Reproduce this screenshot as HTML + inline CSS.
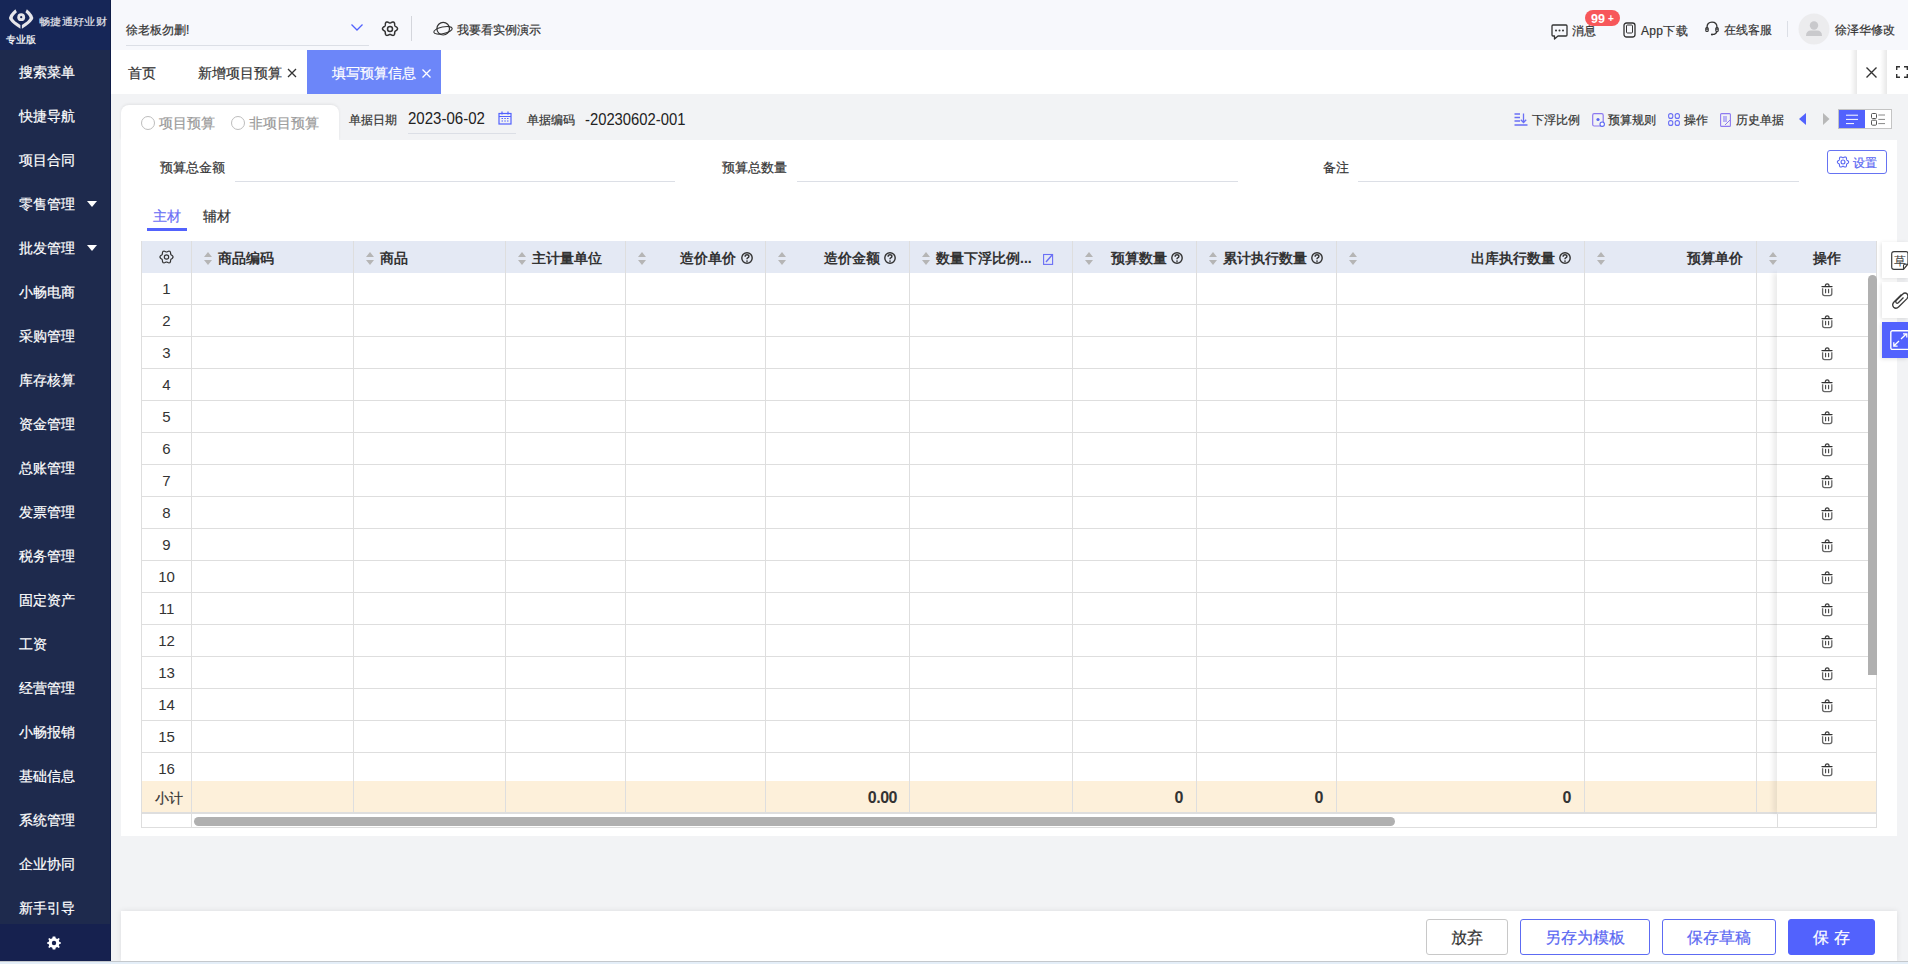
<!DOCTYPE html>
<html><head><meta charset="utf-8"><title>budget</title><style>
*{box-sizing:border-box;margin:0;padding:0}
html,body{width:1908px;height:964px;overflow:hidden;background:#f2f3f5;font-family:"Liberation Sans",sans-serif;color:#333}
body div{-webkit-text-stroke:0.2px currentColor}
.a{position:absolute;white-space:nowrap}
svg{position:absolute;overflow:visible}
#sb{position:absolute;left:0;top:0;width:111px;height:961px;background:#1e2a4d;border-right:1px solid #101d47}
#logo{position:absolute;left:0;top:0;width:110px;height:50px;background:#162657}
#sbfoot{position:absolute;left:0;top:924px;width:110px;height:37px;background:#16214f}
.mi{position:absolute;left:19px;font-size:14px;color:#fff;line-height:20px;white-space:nowrap}
.tri{position:absolute;left:87px;width:0;height:0;border-left:5px solid transparent;border-right:5px solid transparent;border-top:6px solid #fff}
#hdr{position:absolute;left:111px;top:0;width:1797px;height:50px;background:#f7f8fc}
#tabs{position:absolute;left:111px;top:50px;width:1797px;height:44px;background:#fff}
.t10{font-size:10px;line-height:12px}
.t11{font-size:11px;line-height:14px}
.t12{font-size:12px;line-height:16px}
.t13{font-size:13px;line-height:18px}
.t14{font-size:14px;line-height:20px}
.t15{font-size:15px;line-height:20px}
.t16{font-size:16px;line-height:22px}
.ul{position:absolute;height:1px;background:#dcdfe6}
#panel{position:absolute;left:121px;top:140px;width:1776px;height:696px;background:#fff}
#foot{position:absolute;left:121px;top:911px;width:1776px;height:50px;background:#fff;box-shadow:0 0 6px rgba(0,0,0,.09)}
#bstrip{position:absolute;left:0;top:961px;width:1908px;height:3px;background:#e4eef8;border-top:1px solid #c4c8cc}
.btn{position:absolute;top:919px;height:36px;border:1px solid #5d6bf3;border-radius:3px;background:#fff;color:#5a67f2;font-size:16px;line-height:35px;text-align:center;white-space:nowrap}
.vl{position:absolute;width:1px;background:#dedede}
.hl{position:absolute;height:1px;background:#dedede}
.rn{position:absolute;text-align:center;font-size:15px;line-height:20px;color:#333;-webkit-text-stroke:0}
.hd{position:absolute;top:250px;font-size:14px;line-height:16px;font-weight:bold;color:#333;white-space:nowrap;-webkit-text-stroke:0}
</style></head><body>
<div id="sb"><div id="logo"></div><div id="sbfoot"></div></div>
<svg style="left:9px;top:9px" width="25" height="21" viewBox="0 0 25 21">
<path d="M6.4 0.3 Q-1.5 7 0.5 10.5 Q3 14.5 11.4 19.8 L11.4 16 Q5 12 3.8 9.5 Q3 7.5 7.9 3.2 Z" fill="#e6e6ea"/>
<path d="M17.9 0.3 Q25.8 7 23.8 10.5 Q21.3 14.5 12.9 19.8 L12.9 16 Q19.3 12 20.5 9.5 Q21.3 7.5 16.4 3.2 Z" fill="#e6e6ea"/>
<circle cx="12.2" cy="8.2" r="3.9" fill="#e6e6ea"/><circle cx="12.2" cy="8.2" r="1.1" fill="#162657"/>
</svg>
<div class="a" style="left:39px;top:15px;font-size:11px;line-height:12px;color:#e4e4ea;letter-spacing:0.35px;transform:scaleY(0.9);transform-origin:0 50%">畅捷通好业财</div>
<div class="a t10" style="left:6px;top:34px;color:#fff">专业版</div>
<div class="mi" style="top:62px">搜索菜单</div>
<div class="mi" style="top:106px">快捷导航</div>
<div class="mi" style="top:150px">项目合同</div>
<div class="mi" style="top:194px">零售管理</div>
<div class="tri" style="top:201px"></div>
<div class="mi" style="top:238px">批发管理</div>
<div class="tri" style="top:245px"></div>
<div class="mi" style="top:282px">小畅电商</div>
<div class="mi" style="top:326px">采购管理</div>
<div class="mi" style="top:370px">库存核算</div>
<div class="mi" style="top:414px">资金管理</div>
<div class="mi" style="top:458px">总账管理</div>
<div class="mi" style="top:502px">发票管理</div>
<div class="mi" style="top:546px">税务管理</div>
<div class="mi" style="top:590px">固定资产</div>
<div class="mi" style="top:634px">工资</div>
<div class="mi" style="top:678px">经营管理</div>
<div class="mi" style="top:722px">小畅报销</div>
<div class="mi" style="top:766px">基础信息</div>
<div class="mi" style="top:810px">系统管理</div>
<div class="mi" style="top:854px">企业协同</div>
<div class="mi" style="top:898px">新手引导</div>
<svg style="left:47px;top:936px" width="14" height="14" viewBox="0 0 14 14">
<path d="M7 0.5 L8.3 0.5 L8.7 2.3 L10.2 3 L11.8 2 L12.7 2.9 L11.8 4.5 L12.4 6 L14 6.4 L14 7.6 L12.4 8 L11.8 9.5 L12.7 11.1 L11.8 12 L10.2 11.1 L8.7 11.7 L8.3 13.5 L5.7 13.5 L5.3 11.7 L3.8 11.1 L2.2 12 L1.3 11.1 L2.2 9.5 L1.6 8 L0 7.6 L0 6.4 L1.6 6 L2.2 4.5 L1.3 2.9 L2.2 2 L3.8 3 L5.3 2.3 L5.7 0.5 Z" fill="#fff"/>
<circle cx="7" cy="7" r="2.2" fill="#16214f"/></svg>
<div id="hdr"></div>
<div class="a t12" style="left:126px;top:22px;color:#333">徐老板勿删!</div>
<div class="ul" style="left:126px;top:45px;width:243px;background:#dcdfe6"></div>
<svg style="left:351px;top:24px" width="12" height="7" viewBox="0 0 12 7"><path d="M0.5 0.5 L6 6 L11.5 0.5" fill="none" stroke="#5262fd" stroke-width="1.3"/></svg>
<svg style="left:382px;top:21px" width="16" height="16" viewBox="0 0 16 16">
<path d="M15.50 7.70 L15.45 8.09 L15.29 8.47 L15.04 8.82 L14.73 9.13 L14.38 9.41 L14.01 9.65 L13.67 9.88 L13.36 10.09 L13.12 10.31 L12.94 10.55 L12.82 10.83 L12.75 11.15 L12.72 11.52 L12.70 11.93 L12.67 12.37 L12.60 12.81 L12.49 13.24 L12.31 13.63 L12.06 13.95 L11.75 14.20 L11.38 14.34 L10.98 14.39 L10.55 14.36 L10.13 14.24 L9.71 14.08 L9.31 13.88 L8.95 13.70 L8.61 13.54 L8.30 13.44 L8.00 13.40 L7.70 13.44 L7.39 13.54 L7.05 13.70 L6.69 13.88 L6.29 14.08 L5.87 14.24 L5.45 14.36 L5.02 14.39 L4.62 14.34 L4.25 14.20 L3.94 13.95 L3.69 13.63 L3.51 13.24 L3.40 12.81 L3.33 12.37 L3.30 11.93 L3.28 11.52 L3.25 11.15 L3.18 10.83 L3.06 10.55 L2.88 10.31 L2.64 10.09 L2.33 9.88 L1.99 9.65 L1.62 9.41 L1.27 9.13 L0.96 8.82 L0.71 8.47 L0.55 8.09 L0.50 7.70 L0.55 7.31 L0.71 6.93 L0.96 6.58 L1.27 6.27 L1.62 5.99 L1.99 5.75 L2.33 5.52 L2.64 5.31 L2.88 5.09 L3.06 4.85 L3.18 4.57 L3.25 4.25 L3.28 3.88 L3.30 3.47 L3.33 3.03 L3.40 2.59 L3.51 2.16 L3.69 1.77 L3.94 1.45 L4.25 1.20 L4.62 1.06 L5.02 1.01 L5.45 1.04 L5.87 1.16 L6.29 1.32 L6.69 1.52 L7.05 1.70 L7.39 1.86 L7.70 1.96 L8.00 2.00 L8.30 1.96 L8.61 1.86 L8.95 1.70 L9.31 1.52 L9.71 1.32 L10.13 1.16 L10.55 1.04 L10.98 1.01 L11.38 1.06 L11.75 1.20 L12.06 1.45 L12.31 1.77 L12.49 2.16 L12.60 2.59 L12.67 3.03 L12.70 3.47 L12.72 3.88 L12.75 4.25 L12.82 4.57 L12.94 4.85 L13.12 5.09 L13.36 5.31 L13.67 5.52 L14.01 5.75 L14.38 5.99 L14.73 6.27 L15.04 6.58 L15.29 6.93 L15.45 7.31 Z" fill="none" stroke="#333" stroke-width="1.5" stroke-linejoin="round"/>
<circle cx="8" cy="7.9" r="2.5" fill="none" stroke="#333" stroke-width="1.5"/></svg>
<div class="vl" style="left:411px;top:16px;height:25px;background:#d4d6dc"></div>
<svg style="left:433px;top:21px" width="20" height="16" viewBox="0 0 20 16">
<circle cx="10.2" cy="7.7" r="6.3" fill="none" stroke="#333" stroke-width="1.2"/>
<ellipse cx="10" cy="9.3" rx="9.4" ry="3.3" transform="rotate(-12 10 9.3)" fill="none" stroke="#333" stroke-width="1.1" stroke-dasharray="0"/>
</svg>
<div class="a t12" style="left:457px;top:22px;color:#333">我要看实例演示</div>
<svg style="left:1551px;top:24px" width="17" height="16" viewBox="0 0 17 16">
<path d="M2 1 H15 Q16 1 16 2 V11 Q16 12 15 12 H7 L3.5 15 V12 H2 Q1 12 1 11 V2 Q1 1 2 1 Z" fill="none" stroke="#333" stroke-width="1.3" stroke-linejoin="round"/>
<circle cx="5" cy="6.5" r="1" fill="#333"/><circle cx="8.5" cy="6.5" r="1" fill="#333"/><circle cx="12" cy="6.5" r="1" fill="#333"/></svg>
<div class="a t12" style="left:1572px;top:23px">消息</div>
<div class="a" style="left:1585px;top:10px;width:35px;height:16px;border-radius:8px;background:#f7575a;color:#fff;font-size:11px;line-height:16px;font-weight:bold;text-align:center;-webkit-text-stroke:0"><span style="font-size:12.5px;position:relative;top:0.5px">99</span> <span style="font-size:10px">+</span></div>
<svg style="left:1623px;top:22px" width="13" height="16" viewBox="0 0 13 16">
<rect x="1" y="1" width="11" height="14" rx="2.5" fill="none" stroke="#333" stroke-width="1.3"/>
<rect x="3.5" y="3" width="6" height="8" rx="1" fill="none" stroke="#333" stroke-width="1"/></svg>
<div class="a t12" style="left:1641px;top:23px;letter-spacing:0.3px">App下载</div>
<svg style="left:1705px;top:21px" width="14" height="15" viewBox="0 0 14 15">
<path d="M2 9 V6.5 Q2 1.2 7 1.2 Q12 1.2 12 6.5 V9" fill="none" stroke="#333" stroke-width="1.3"/>
<rect x="0.8" y="6.5" width="2.4" height="4" rx="1" fill="none" stroke="#333" stroke-width="1.2"/>
<rect x="10.8" y="6.5" width="2.4" height="4" rx="1" fill="none" stroke="#333" stroke-width="1.2"/>
<path d="M12 10.5 Q11 13.5 7.5 13.5" fill="none" stroke="#333" stroke-width="1.2"/><circle cx="7" cy="13.5" r="1.1" fill="#333"/></svg>
<div class="a t12" style="left:1724px;top:22px">在线客服</div>
<div class="vl" style="left:1787px;top:21px;height:16px;background:#dcdfe6"></div>
<svg style="left:1798px;top:13px" width="32" height="32" viewBox="0 0 32 32">
<circle cx="16" cy="16" r="15.5" fill="#ececee"/>
<circle cx="16" cy="12.5" r="4.2" fill="#c9c9cc"/><path d="M8 23 Q8 17.5 13 17.5 H19 Q24 17.5 24 23 Z" fill="#c9c9cc"/></svg>
<div class="a t12" style="left:1835px;top:22px">徐泽华修改</div>
<div id="tabs"></div>
<div class="a t14" style="left:128px;top:63px">首页</div>
<div class="a t14" style="left:198px;top:63px">新增项目预算</div>
<svg style="left:287px;top:68px" width="10" height="10" viewBox="0 0 10 10"><path d="M1 1 L9 9 M9 1 L1 9" stroke="#333" stroke-width="1.3"/></svg>
<div class="a" style="left:307px;top:50px;width:134px;height:44px;background:#6c86f9"></div>
<div class="a t14" style="left:332px;top:63px;color:#fff">填写预算信息</div>
<svg style="left:422px;top:69px" width="9" height="9" viewBox="0 0 9 9"><path d="M0.5 0.5 L8.5 8.5 M8.5 0.5 L0.5 8.5" stroke="#fff" stroke-width="1.3"/></svg>
<div class="a" style="left:1850px;top:50px;width:7px;height:44px;background:linear-gradient(to right,rgba(0,0,0,0),rgba(0,0,0,.09))"></div>
<svg style="left:1866px;top:67px" width="11" height="11" viewBox="0 0 11 11"><path d="M0.5 0.5 L10.5 10.5 M10.5 0.5 L0.5 10.5" stroke="#333" stroke-width="1.4"/></svg>
<div class="a" style="left:1880px;top:50px;width:7px;height:44px;background:linear-gradient(to right,rgba(0,0,0,0),rgba(0,0,0,.09))"></div>
<svg style="left:1896px;top:66px" width="12" height="12" viewBox="0 0 12 12">
<path d="M0.7 4 V0.7 H4 M8 0.7 H11.3 V4 M11.3 8 V11.3 H8 M4 11.3 H0.7 V8" fill="none" stroke="#333" stroke-width="1.4"/></svg>
<div class="a" style="left:121px;top:105px;width:218px;height:35px;background:#fff;border-radius:8px 8px 0 0;box-shadow:0 -1px 3px rgba(0,0,0,.07)"></div>
<div class="a" style="left:141px;top:116px;width:14px;height:14px;border:1px solid #bdbdbd;border-radius:50%;background:#fff"></div>
<div class="a t14" style="left:159px;top:113px;color:#999">项目预算</div>
<div class="a" style="left:231px;top:116px;width:14px;height:14px;border:1px solid #bdbdbd;border-radius:50%;background:#fff"></div>
<div class="a t14" style="left:249px;top:113px;color:#999">非项目预算</div>
<div class="a t12" style="left:349px;top:112px">单据日期</div>
<div class="a" style="left:408px;top:109px;color:#222;font-size:16px;line-height:20px;-webkit-text-stroke:0;transform:scaleX(0.94);transform-origin:0 0">2023-06-02</div>
<svg style="left:498px;top:111px" width="14" height="14" viewBox="0 0 14 14">
<rect x="1" y="2.5" width="12" height="10.5" fill="none" stroke="#5262fd" stroke-width="1.2"/>
<path d="M1 5.5 H13 M4 0.5 V3.5 M10 0.5 V3.5" stroke="#5262fd" stroke-width="1.2"/>
<path d="M3.5 7.5 H5 M6.3 7.5 H7.8 M9 7.5 H10.5 M3.5 10 H5 M6.3 10 H7.8 M9 10 H10.5" stroke="#5262fd" stroke-width="1"/></svg>
<div class="ul" style="left:408px;top:133px;width:108px"></div>
<div class="a t12" style="left:527px;top:112px">单据编码</div>
<div class="a" style="left:585px;top:110px;color:#222;font-size:16px;line-height:20px;-webkit-text-stroke:0;transform:scaleX(0.925);transform-origin:0 0">-20230602-001</div>
<svg style="left:1514px;top:113px" width="14" height="13" viewBox="0 0 14 13">
<path d="M0.5 1 H6 M0.5 4.5 H6 M0.5 8 H6 M0.5 12 H13.5 M9.5 0.5 V9.5 M6.8 6.8 L9.5 9.5 L12.2 6.8" fill="none" stroke="#6a6ff5" stroke-width="1.3"/></svg>
<div class="a t12" style="left:1532px;top:112px">下浮比例</div>
<svg style="left:1592px;top:113px" width="13" height="14" viewBox="0 0 13 14">
<rect x="0.7" y="0.7" width="10.5" height="12.3" rx="1.5" fill="none" stroke="#8d79f0" stroke-width="1.2"/>
<circle cx="6" cy="6.5" r="1.6" fill="#5a67f2"/><circle cx="10.2" cy="11.2" r="2.2" fill="#fff" stroke="#5a67f2" stroke-width="1.1"/></svg>
<div class="a t12" style="left:1608px;top:112px">预算规则</div>
<svg style="left:1668px;top:113px" width="12" height="13" viewBox="0 0 12 13">
<rect x="0.6" y="0.6" width="4.2" height="4.8" rx="2" fill="none" stroke="#6a6ff5" stroke-width="1.1"/>
<rect x="7.2" y="0.6" width="4.2" height="4.8" rx="2" fill="none" stroke="#6a6ff5" stroke-width="1.1"/>
<rect x="0.6" y="7.6" width="4.2" height="4.8" rx="2" fill="none" stroke="#6a6ff5" stroke-width="1.1"/>
<rect x="7.2" y="7.6" width="4.2" height="4.8" rx="2" fill="none" stroke="#6a6ff5" stroke-width="1.1"/></svg>
<div class="a t12" style="left:1684px;top:112px">操作</div>
<svg style="left:1720px;top:113px" width="11" height="14" viewBox="0 0 11 14">
<rect x="0.6" y="0.6" width="9.8" height="12.8" rx="1" fill="none" stroke="#8d79f0" stroke-width="1.1"/>
<rect x="3" y="3" width="4" height="6" fill="#b9b2f5"/><path d="M5 12 L10 7" stroke="#8d79f0" stroke-width="1"/></svg>
<div class="a t12" style="left:1736px;top:112px">历史单据</div>
<svg style="left:1799px;top:113px" width="7" height="12" viewBox="0 0 7 12"><path d="M7 0 V12 L0 6 Z" fill="#5262fd"/></svg>
<svg style="left:1823px;top:113px" width="6.5" height="12" viewBox="0 0 6.5 12"><path d="M0 0 V12 L6.5 6 Z" fill="#b8b8b8"/></svg>
<div class="a" style="left:1838px;top:109px;width:54px;height:20px;border:1px solid #c4c4c4;background:#fff"></div>
<div class="a" style="left:1839px;top:110px;width:26px;height:18px;background:#5262fd"></div>
<svg style="left:1846px;top:114px" width="12" height="10" viewBox="0 0 12 10"><path d="M0 1.2 H12 M0 5.4 H12 M0 9.6 H8" stroke="#fff" stroke-width="1"/></svg>
<svg style="left:1871px;top:113px" width="14" height="13" viewBox="0 0 14 13">
<rect x="0.5" y="0.5" width="5" height="5" rx="1" fill="none" stroke="#555" stroke-width="1"/><rect x="0.5" y="7.2" width="5" height="5" rx="1" fill="none" stroke="#555" stroke-width="1"/>
<path d="M7.3 2 H14 M7.3 6.4 H14 M7.3 10.6 H14" stroke="#888" stroke-width="1"/></svg>
<div id="panel"></div>
<div class="a t13" style="left:160px;top:159px">预算总金额</div>
<div class="ul" style="left:235px;top:181px;width:440px"></div>
<div class="a t13" style="left:722px;top:159px">预算总数量</div>
<div class="ul" style="left:797px;top:181px;width:441px"></div>
<div class="a t13" style="left:1323px;top:159px">备注</div>
<div class="ul" style="left:1358px;top:181px;width:441px"></div>
<div class="a" style="left:1827px;top:150px;width:60px;height:24px;border:1px solid #6673f2;border-radius:3px"></div>
<svg style="left:1837px;top:156px" width="12" height="12" viewBox="0 0 16 16">
<path d="M15.50 8.00 L15.45 8.39 L15.29 8.77 L15.04 9.12 L14.73 9.43 L14.38 9.71 L14.01 9.95 L13.67 10.18 L13.36 10.39 L13.12 10.61 L12.94 10.85 L12.82 11.13 L12.75 11.45 L12.72 11.82 L12.70 12.23 L12.67 12.67 L12.60 13.11 L12.49 13.54 L12.31 13.93 L12.06 14.25 L11.75 14.50 L11.38 14.64 L10.98 14.69 L10.55 14.66 L10.13 14.54 L9.71 14.38 L9.31 14.18 L8.95 14.00 L8.61 13.84 L8.30 13.74 L8.00 13.70 L7.70 13.74 L7.39 13.84 L7.05 14.00 L6.69 14.18 L6.29 14.38 L5.87 14.54 L5.45 14.66 L5.02 14.69 L4.62 14.64 L4.25 14.50 L3.94 14.25 L3.69 13.93 L3.51 13.54 L3.40 13.11 L3.33 12.67 L3.30 12.23 L3.28 11.82 L3.25 11.45 L3.18 11.13 L3.06 10.85 L2.88 10.61 L2.64 10.39 L2.33 10.18 L1.99 9.95 L1.62 9.71 L1.27 9.43 L0.96 9.12 L0.71 8.77 L0.55 8.39 L0.50 8.00 L0.55 7.61 L0.71 7.23 L0.96 6.88 L1.27 6.57 L1.62 6.29 L1.99 6.05 L2.33 5.82 L2.64 5.61 L2.88 5.39 L3.06 5.15 L3.18 4.87 L3.25 4.55 L3.28 4.18 L3.30 3.77 L3.33 3.33 L3.40 2.89 L3.51 2.46 L3.69 2.07 L3.94 1.75 L4.25 1.50 L4.62 1.36 L5.02 1.31 L5.45 1.34 L5.87 1.46 L6.29 1.62 L6.69 1.82 L7.05 2.00 L7.39 2.16 L7.70 2.26 L8.00 2.30 L8.30 2.26 L8.61 2.16 L8.95 2.00 L9.31 1.82 L9.71 1.62 L10.13 1.46 L10.55 1.34 L10.98 1.31 L11.38 1.36 L11.75 1.50 L12.06 1.75 L12.31 2.07 L12.49 2.46 L12.60 2.89 L12.67 3.33 L12.70 3.77 L12.72 4.18 L12.75 4.55 L12.82 4.87 L12.94 5.15 L13.12 5.39 L13.36 5.61 L13.67 5.82 L14.01 6.05 L14.38 6.29 L14.73 6.57 L15.04 6.88 L15.29 7.23 L15.45 7.61 Z" fill="none" stroke="#5a67f2" stroke-width="1.5" stroke-linejoin="round"/>
<circle cx="8" cy="8" r="2.6" fill="none" stroke="#5a67f2" stroke-width="1.5"/></svg>
<div class="a t12" style="left:1853px;top:155px;color:#5a67f2">设置</div>
<div class="a t14" style="left:153px;top:206px;color:#6a6ff5">主材</div>
<div class="a" style="left:147px;top:228px;width:40px;height:3px;background:#5262fd"></div>
<div class="a t14" style="left:203px;top:206px">辅材</div>
<div class="a" style="left:141px;top:241px;width:1736px;height:32px;background:#e4e9f4"></div>
<div class="rn" style="left:141px;width:51px;top:279px">1</div>
<div class="hl" style="left:141px;top:304px;width:1636px"></div>
<div class="rn" style="left:141px;width:51px;top:311px">2</div>
<div class="hl" style="left:141px;top:336px;width:1636px"></div>
<div class="rn" style="left:141px;width:51px;top:343px">3</div>
<div class="hl" style="left:141px;top:368px;width:1636px"></div>
<div class="rn" style="left:141px;width:51px;top:375px">4</div>
<div class="hl" style="left:141px;top:400px;width:1636px"></div>
<div class="rn" style="left:141px;width:51px;top:407px">5</div>
<div class="hl" style="left:141px;top:432px;width:1636px"></div>
<div class="rn" style="left:141px;width:51px;top:439px">6</div>
<div class="hl" style="left:141px;top:464px;width:1636px"></div>
<div class="rn" style="left:141px;width:51px;top:471px">7</div>
<div class="hl" style="left:141px;top:496px;width:1636px"></div>
<div class="rn" style="left:141px;width:51px;top:503px">8</div>
<div class="hl" style="left:141px;top:528px;width:1636px"></div>
<div class="rn" style="left:141px;width:51px;top:535px">9</div>
<div class="hl" style="left:141px;top:560px;width:1636px"></div>
<div class="rn" style="left:141px;width:51px;top:567px">10</div>
<div class="hl" style="left:141px;top:592px;width:1636px"></div>
<div class="rn" style="left:141px;width:51px;top:599px">11</div>
<div class="hl" style="left:141px;top:624px;width:1636px"></div>
<div class="rn" style="left:141px;width:51px;top:631px">12</div>
<div class="hl" style="left:141px;top:656px;width:1636px"></div>
<div class="rn" style="left:141px;width:51px;top:663px">13</div>
<div class="hl" style="left:141px;top:688px;width:1636px"></div>
<div class="rn" style="left:141px;width:51px;top:695px">14</div>
<div class="hl" style="left:141px;top:720px;width:1636px"></div>
<div class="rn" style="left:141px;width:51px;top:727px">15</div>
<div class="hl" style="left:141px;top:752px;width:1636px"></div>
<div class="rn" style="left:141px;width:51px;top:759px">16</div>
<div class="hl" style="left:141px;top:784px;width:1636px"></div>
<div class="a" style="left:141px;top:781px;width:1736px;height:31px;background:#fdf0da"></div>
<div class="a" style="left:141px;top:812px;width:1736px;height:2px;background:#dedede"></div>
<div class="a t14" style="left:155px;top:788px">小计</div>
<div class="a" style="left:837px;width:60px;top:788px;text-align:right;font-size:16px;line-height:20px;letter-spacing:-0.5px;font-weight:bold;-webkit-text-stroke:0">0.00</div>
<div class="a" style="left:1123px;width:60px;top:788px;text-align:right;font-size:16px;line-height:20px;letter-spacing:-0.5px;font-weight:bold;-webkit-text-stroke:0">0</div>
<div class="a" style="left:1263px;width:60px;top:788px;text-align:right;font-size:16px;line-height:20px;letter-spacing:-0.5px;font-weight:bold;-webkit-text-stroke:0">0</div>
<div class="a" style="left:1511px;width:60px;top:788px;text-align:right;font-size:16px;line-height:20px;letter-spacing:-0.5px;font-weight:bold;-webkit-text-stroke:0">0</div>
<div class="vl" style="left:141px;top:241px;height:586px"></div>
<div class="vl" style="left:191px;top:241px;height:586px"></div>
<div class="vl" style="left:353px;top:241px;height:586px"></div>
<div class="vl" style="left:505px;top:241px;height:586px"></div>
<div class="vl" style="left:625px;top:241px;height:586px"></div>
<div class="vl" style="left:765px;top:241px;height:586px"></div>
<div class="vl" style="left:909px;top:241px;height:586px"></div>
<div class="vl" style="left:1072px;top:241px;height:586px"></div>
<div class="vl" style="left:1196px;top:241px;height:586px"></div>
<div class="vl" style="left:1336px;top:241px;height:586px"></div>
<div class="vl" style="left:1584px;top:241px;height:586px"></div>
<div class="vl" style="left:1756px;top:241px;height:586px"></div>
<div class="hl" style="left:141px;top:827px;width:1736px"></div>
<div class="a" style="left:194px;top:817px;width:1201px;height:9px;border-radius:5px;background:#b0b0b0"></div>
<div class="a" style="left:193px;top:814px;width:1583px;height:13px;background:#fff"></div>
<div class="a" style="left:194px;top:817px;width:1201px;height:9px;border-radius:5px;background:#b0b0b0"></div>
<svg style="left:159px;top:250px" width="15" height="14" viewBox="0 0 16 16">
<path d="M15.50 8.00 L15.45 8.39 L15.29 8.77 L15.04 9.12 L14.73 9.43 L14.38 9.71 L14.01 9.95 L13.67 10.18 L13.36 10.39 L13.12 10.61 L12.94 10.85 L12.82 11.13 L12.75 11.45 L12.72 11.82 L12.70 12.23 L12.67 12.67 L12.60 13.11 L12.49 13.54 L12.31 13.93 L12.06 14.25 L11.75 14.50 L11.38 14.64 L10.98 14.69 L10.55 14.66 L10.13 14.54 L9.71 14.38 L9.31 14.18 L8.95 14.00 L8.61 13.84 L8.30 13.74 L8.00 13.70 L7.70 13.74 L7.39 13.84 L7.05 14.00 L6.69 14.18 L6.29 14.38 L5.87 14.54 L5.45 14.66 L5.02 14.69 L4.62 14.64 L4.25 14.50 L3.94 14.25 L3.69 13.93 L3.51 13.54 L3.40 13.11 L3.33 12.67 L3.30 12.23 L3.28 11.82 L3.25 11.45 L3.18 11.13 L3.06 10.85 L2.88 10.61 L2.64 10.39 L2.33 10.18 L1.99 9.95 L1.62 9.71 L1.27 9.43 L0.96 9.12 L0.71 8.77 L0.55 8.39 L0.50 8.00 L0.55 7.61 L0.71 7.23 L0.96 6.88 L1.27 6.57 L1.62 6.29 L1.99 6.05 L2.33 5.82 L2.64 5.61 L2.88 5.39 L3.06 5.15 L3.18 4.87 L3.25 4.55 L3.28 4.18 L3.30 3.77 L3.33 3.33 L3.40 2.89 L3.51 2.46 L3.69 2.07 L3.94 1.75 L4.25 1.50 L4.62 1.36 L5.02 1.31 L5.45 1.34 L5.87 1.46 L6.29 1.62 L6.69 1.82 L7.05 2.00 L7.39 2.16 L7.70 2.26 L8.00 2.30 L8.30 2.26 L8.61 2.16 L8.95 2.00 L9.31 1.82 L9.71 1.62 L10.13 1.46 L10.55 1.34 L10.98 1.31 L11.38 1.36 L11.75 1.50 L12.06 1.75 L12.31 2.07 L12.49 2.46 L12.60 2.89 L12.67 3.33 L12.70 3.77 L12.72 4.18 L12.75 4.55 L12.82 4.87 L12.94 5.15 L13.12 5.39 L13.36 5.61 L13.67 5.82 L14.01 6.05 L14.38 6.29 L14.73 6.57 L15.04 6.88 L15.29 7.23 L15.45 7.61 Z" fill="none" stroke="#333" stroke-width="1.3" stroke-linejoin="round"/>
<circle cx="8" cy="8" r="2.5" fill="none" stroke="#333" stroke-width="1.3"/></svg>
<svg style="left:204px;top:252px" width="8" height="13" viewBox="0 0 8 13"><path d="M4 0 L8 5 H0 Z M0 8 H8 L4 13 Z" fill="#b5b5b5"/></svg>
<div class="hd" style="left:218px">商品编码</div>
<svg style="left:366px;top:252px" width="8" height="13" viewBox="0 0 8 13"><path d="M4 0 L8 5 H0 Z M0 8 H8 L4 13 Z" fill="#b5b5b5"/></svg>
<div class="hd" style="left:380px">商品</div>
<svg style="left:518px;top:252px" width="8" height="13" viewBox="0 0 8 13"><path d="M4 0 L8 5 H0 Z M0 8 H8 L4 13 Z" fill="#b5b5b5"/></svg>
<div class="hd" style="left:532px">主计量单位</div>
<svg style="left:638px;top:252px" width="8" height="13" viewBox="0 0 8 13"><path d="M4 0 L8 5 H0 Z M0 8 H8 L4 13 Z" fill="#b5b5b5"/></svg>
<div class="hd" style="left:680px">造价单价</div>
<svg style="left:741px;top:252px" width="12" height="12" viewBox="0 0 12 12"><circle cx="6" cy="6" r="5.2" fill="none" stroke="#333" stroke-width="1.4"/><path d="M4.1 4.7 Q4.1 2.7 6 2.7 Q7.9 2.7 7.9 4.4 Q7.9 5.4 6.7 5.9 Q6 6.3 6 7.3" fill="none" stroke="#333" stroke-width="1.4"/><circle cx="6" cy="9.1" r="0.85" fill="#333"/></svg>
<svg style="left:778px;top:252px" width="8" height="13" viewBox="0 0 8 13"><path d="M4 0 L8 5 H0 Z M0 8 H8 L4 13 Z" fill="#b5b5b5"/></svg>
<div class="hd" style="left:824px">造价金额</div>
<svg style="left:884px;top:252px" width="12" height="12" viewBox="0 0 12 12"><circle cx="6" cy="6" r="5.2" fill="none" stroke="#333" stroke-width="1.4"/><path d="M4.1 4.7 Q4.1 2.7 6 2.7 Q7.9 2.7 7.9 4.4 Q7.9 5.4 6.7 5.9 Q6 6.3 6 7.3" fill="none" stroke="#333" stroke-width="1.4"/><circle cx="6" cy="9.1" r="0.85" fill="#333"/></svg>
<svg style="left:922px;top:252px" width="8" height="13" viewBox="0 0 8 13"><path d="M4 0 L8 5 H0 Z M0 8 H8 L4 13 Z" fill="#b5b5b5"/></svg>
<div class="hd" style="left:936px">数量下浮比例...</div>
<svg style="left:1043px;top:253px" width="11" height="12" viewBox="0 0 11 12">
<rect x="0.6" y="1.5" width="9" height="9.9" fill="none" stroke="#6a6ff5" stroke-width="1.1"/><path d="M3 9 L9.5 1.5" stroke="#6a6ff5" stroke-width="1.4"/></svg>
<svg style="left:1085px;top:252px" width="8" height="13" viewBox="0 0 8 13"><path d="M4 0 L8 5 H0 Z M0 8 H8 L4 13 Z" fill="#b5b5b5"/></svg>
<div class="hd" style="left:1111px">预算数量</div>
<svg style="left:1171px;top:252px" width="12" height="12" viewBox="0 0 12 12"><circle cx="6" cy="6" r="5.2" fill="none" stroke="#333" stroke-width="1.4"/><path d="M4.1 4.7 Q4.1 2.7 6 2.7 Q7.9 2.7 7.9 4.4 Q7.9 5.4 6.7 5.9 Q6 6.3 6 7.3" fill="none" stroke="#333" stroke-width="1.4"/><circle cx="6" cy="9.1" r="0.85" fill="#333"/></svg>
<svg style="left:1209px;top:252px" width="8" height="13" viewBox="0 0 8 13"><path d="M4 0 L8 5 H0 Z M0 8 H8 L4 13 Z" fill="#b5b5b5"/></svg>
<div class="hd" style="left:1223px">累计执行数量</div>
<svg style="left:1311px;top:252px" width="12" height="12" viewBox="0 0 12 12"><circle cx="6" cy="6" r="5.2" fill="none" stroke="#333" stroke-width="1.4"/><path d="M4.1 4.7 Q4.1 2.7 6 2.7 Q7.9 2.7 7.9 4.4 Q7.9 5.4 6.7 5.9 Q6 6.3 6 7.3" fill="none" stroke="#333" stroke-width="1.4"/><circle cx="6" cy="9.1" r="0.85" fill="#333"/></svg>
<svg style="left:1349px;top:252px" width="8" height="13" viewBox="0 0 8 13"><path d="M4 0 L8 5 H0 Z M0 8 H8 L4 13 Z" fill="#b5b5b5"/></svg>
<div class="hd" style="left:1471px">出库执行数量</div>
<svg style="left:1559px;top:252px" width="12" height="12" viewBox="0 0 12 12"><circle cx="6" cy="6" r="5.2" fill="none" stroke="#333" stroke-width="1.4"/><path d="M4.1 4.7 Q4.1 2.7 6 2.7 Q7.9 2.7 7.9 4.4 Q7.9 5.4 6.7 5.9 Q6 6.3 6 7.3" fill="none" stroke="#333" stroke-width="1.4"/><circle cx="6" cy="9.1" r="0.85" fill="#333"/></svg>
<svg style="left:1597px;top:252px" width="8" height="13" viewBox="0 0 8 13"><path d="M4 0 L8 5 H0 Z M0 8 H8 L4 13 Z" fill="#b5b5b5"/></svg>
<div class="hd" style="left:1687px">预算单价</div>
<svg style="left:1769px;top:252px" width="8" height="13" viewBox="0 0 8 13"><path d="M4 0 L8 5 H0 Z M0 8 H8 L4 13 Z" fill="#b5b5b5"/></svg>
<div class="a" style="left:1777px;top:273px;width:100px;height:540px;background:#fff;box-shadow:-4px 0 5px rgba(0,0,0,.08)"></div><div class="a" style="left:1777px;top:813px;width:100px;height:14px;background:#fff"></div>
<div class="a" style="left:1777px;top:241px;width:100px;height:32px;background:#e4e9f4"></div>
<div class="hd" style="left:1813px">操作</div>
<div class="hl" style="left:1777px;top:304px;width:100px"></div>
<svg style="left:1821px;top:283px" width="12" height="14" viewBox="0 0 12 14">
<path d="M4.3 3.4 Q4.3 0.8 6.2 0.8 Q8.1 0.8 8.1 3.4" fill="none" stroke="#444" stroke-width="1.2"/><path d="M1 3.6 H11" stroke="#333" stroke-width="1.3" stroke-linecap="round"/><path d="M1.6 5.2 V10.5 Q1.6 12.6 3.6 12.6 H8.8 Q10.8 12.6 10.8 10.5 V5.2" fill="none" stroke="#666" stroke-width="1.3"/><path d="M4.6 6.3 V9.7 M7.6 6.3 V9.7" stroke="#444" stroke-width="1.1" stroke-linecap="round"/></svg>
<div class="hl" style="left:1777px;top:336px;width:100px"></div>
<svg style="left:1821px;top:315px" width="12" height="14" viewBox="0 0 12 14">
<path d="M4.3 3.4 Q4.3 0.8 6.2 0.8 Q8.1 0.8 8.1 3.4" fill="none" stroke="#444" stroke-width="1.2"/><path d="M1 3.6 H11" stroke="#333" stroke-width="1.3" stroke-linecap="round"/><path d="M1.6 5.2 V10.5 Q1.6 12.6 3.6 12.6 H8.8 Q10.8 12.6 10.8 10.5 V5.2" fill="none" stroke="#666" stroke-width="1.3"/><path d="M4.6 6.3 V9.7 M7.6 6.3 V9.7" stroke="#444" stroke-width="1.1" stroke-linecap="round"/></svg>
<div class="hl" style="left:1777px;top:368px;width:100px"></div>
<svg style="left:1821px;top:347px" width="12" height="14" viewBox="0 0 12 14">
<path d="M4.3 3.4 Q4.3 0.8 6.2 0.8 Q8.1 0.8 8.1 3.4" fill="none" stroke="#444" stroke-width="1.2"/><path d="M1 3.6 H11" stroke="#333" stroke-width="1.3" stroke-linecap="round"/><path d="M1.6 5.2 V10.5 Q1.6 12.6 3.6 12.6 H8.8 Q10.8 12.6 10.8 10.5 V5.2" fill="none" stroke="#666" stroke-width="1.3"/><path d="M4.6 6.3 V9.7 M7.6 6.3 V9.7" stroke="#444" stroke-width="1.1" stroke-linecap="round"/></svg>
<div class="hl" style="left:1777px;top:400px;width:100px"></div>
<svg style="left:1821px;top:379px" width="12" height="14" viewBox="0 0 12 14">
<path d="M4.3 3.4 Q4.3 0.8 6.2 0.8 Q8.1 0.8 8.1 3.4" fill="none" stroke="#444" stroke-width="1.2"/><path d="M1 3.6 H11" stroke="#333" stroke-width="1.3" stroke-linecap="round"/><path d="M1.6 5.2 V10.5 Q1.6 12.6 3.6 12.6 H8.8 Q10.8 12.6 10.8 10.5 V5.2" fill="none" stroke="#666" stroke-width="1.3"/><path d="M4.6 6.3 V9.7 M7.6 6.3 V9.7" stroke="#444" stroke-width="1.1" stroke-linecap="round"/></svg>
<div class="hl" style="left:1777px;top:432px;width:100px"></div>
<svg style="left:1821px;top:411px" width="12" height="14" viewBox="0 0 12 14">
<path d="M4.3 3.4 Q4.3 0.8 6.2 0.8 Q8.1 0.8 8.1 3.4" fill="none" stroke="#444" stroke-width="1.2"/><path d="M1 3.6 H11" stroke="#333" stroke-width="1.3" stroke-linecap="round"/><path d="M1.6 5.2 V10.5 Q1.6 12.6 3.6 12.6 H8.8 Q10.8 12.6 10.8 10.5 V5.2" fill="none" stroke="#666" stroke-width="1.3"/><path d="M4.6 6.3 V9.7 M7.6 6.3 V9.7" stroke="#444" stroke-width="1.1" stroke-linecap="round"/></svg>
<div class="hl" style="left:1777px;top:464px;width:100px"></div>
<svg style="left:1821px;top:443px" width="12" height="14" viewBox="0 0 12 14">
<path d="M4.3 3.4 Q4.3 0.8 6.2 0.8 Q8.1 0.8 8.1 3.4" fill="none" stroke="#444" stroke-width="1.2"/><path d="M1 3.6 H11" stroke="#333" stroke-width="1.3" stroke-linecap="round"/><path d="M1.6 5.2 V10.5 Q1.6 12.6 3.6 12.6 H8.8 Q10.8 12.6 10.8 10.5 V5.2" fill="none" stroke="#666" stroke-width="1.3"/><path d="M4.6 6.3 V9.7 M7.6 6.3 V9.7" stroke="#444" stroke-width="1.1" stroke-linecap="round"/></svg>
<div class="hl" style="left:1777px;top:496px;width:100px"></div>
<svg style="left:1821px;top:475px" width="12" height="14" viewBox="0 0 12 14">
<path d="M4.3 3.4 Q4.3 0.8 6.2 0.8 Q8.1 0.8 8.1 3.4" fill="none" stroke="#444" stroke-width="1.2"/><path d="M1 3.6 H11" stroke="#333" stroke-width="1.3" stroke-linecap="round"/><path d="M1.6 5.2 V10.5 Q1.6 12.6 3.6 12.6 H8.8 Q10.8 12.6 10.8 10.5 V5.2" fill="none" stroke="#666" stroke-width="1.3"/><path d="M4.6 6.3 V9.7 M7.6 6.3 V9.7" stroke="#444" stroke-width="1.1" stroke-linecap="round"/></svg>
<div class="hl" style="left:1777px;top:528px;width:100px"></div>
<svg style="left:1821px;top:507px" width="12" height="14" viewBox="0 0 12 14">
<path d="M4.3 3.4 Q4.3 0.8 6.2 0.8 Q8.1 0.8 8.1 3.4" fill="none" stroke="#444" stroke-width="1.2"/><path d="M1 3.6 H11" stroke="#333" stroke-width="1.3" stroke-linecap="round"/><path d="M1.6 5.2 V10.5 Q1.6 12.6 3.6 12.6 H8.8 Q10.8 12.6 10.8 10.5 V5.2" fill="none" stroke="#666" stroke-width="1.3"/><path d="M4.6 6.3 V9.7 M7.6 6.3 V9.7" stroke="#444" stroke-width="1.1" stroke-linecap="round"/></svg>
<div class="hl" style="left:1777px;top:560px;width:100px"></div>
<svg style="left:1821px;top:539px" width="12" height="14" viewBox="0 0 12 14">
<path d="M4.3 3.4 Q4.3 0.8 6.2 0.8 Q8.1 0.8 8.1 3.4" fill="none" stroke="#444" stroke-width="1.2"/><path d="M1 3.6 H11" stroke="#333" stroke-width="1.3" stroke-linecap="round"/><path d="M1.6 5.2 V10.5 Q1.6 12.6 3.6 12.6 H8.8 Q10.8 12.6 10.8 10.5 V5.2" fill="none" stroke="#666" stroke-width="1.3"/><path d="M4.6 6.3 V9.7 M7.6 6.3 V9.7" stroke="#444" stroke-width="1.1" stroke-linecap="round"/></svg>
<div class="hl" style="left:1777px;top:592px;width:100px"></div>
<svg style="left:1821px;top:571px" width="12" height="14" viewBox="0 0 12 14">
<path d="M4.3 3.4 Q4.3 0.8 6.2 0.8 Q8.1 0.8 8.1 3.4" fill="none" stroke="#444" stroke-width="1.2"/><path d="M1 3.6 H11" stroke="#333" stroke-width="1.3" stroke-linecap="round"/><path d="M1.6 5.2 V10.5 Q1.6 12.6 3.6 12.6 H8.8 Q10.8 12.6 10.8 10.5 V5.2" fill="none" stroke="#666" stroke-width="1.3"/><path d="M4.6 6.3 V9.7 M7.6 6.3 V9.7" stroke="#444" stroke-width="1.1" stroke-linecap="round"/></svg>
<div class="hl" style="left:1777px;top:624px;width:100px"></div>
<svg style="left:1821px;top:603px" width="12" height="14" viewBox="0 0 12 14">
<path d="M4.3 3.4 Q4.3 0.8 6.2 0.8 Q8.1 0.8 8.1 3.4" fill="none" stroke="#444" stroke-width="1.2"/><path d="M1 3.6 H11" stroke="#333" stroke-width="1.3" stroke-linecap="round"/><path d="M1.6 5.2 V10.5 Q1.6 12.6 3.6 12.6 H8.8 Q10.8 12.6 10.8 10.5 V5.2" fill="none" stroke="#666" stroke-width="1.3"/><path d="M4.6 6.3 V9.7 M7.6 6.3 V9.7" stroke="#444" stroke-width="1.1" stroke-linecap="round"/></svg>
<div class="hl" style="left:1777px;top:656px;width:100px"></div>
<svg style="left:1821px;top:635px" width="12" height="14" viewBox="0 0 12 14">
<path d="M4.3 3.4 Q4.3 0.8 6.2 0.8 Q8.1 0.8 8.1 3.4" fill="none" stroke="#444" stroke-width="1.2"/><path d="M1 3.6 H11" stroke="#333" stroke-width="1.3" stroke-linecap="round"/><path d="M1.6 5.2 V10.5 Q1.6 12.6 3.6 12.6 H8.8 Q10.8 12.6 10.8 10.5 V5.2" fill="none" stroke="#666" stroke-width="1.3"/><path d="M4.6 6.3 V9.7 M7.6 6.3 V9.7" stroke="#444" stroke-width="1.1" stroke-linecap="round"/></svg>
<div class="hl" style="left:1777px;top:688px;width:100px"></div>
<svg style="left:1821px;top:667px" width="12" height="14" viewBox="0 0 12 14">
<path d="M4.3 3.4 Q4.3 0.8 6.2 0.8 Q8.1 0.8 8.1 3.4" fill="none" stroke="#444" stroke-width="1.2"/><path d="M1 3.6 H11" stroke="#333" stroke-width="1.3" stroke-linecap="round"/><path d="M1.6 5.2 V10.5 Q1.6 12.6 3.6 12.6 H8.8 Q10.8 12.6 10.8 10.5 V5.2" fill="none" stroke="#666" stroke-width="1.3"/><path d="M4.6 6.3 V9.7 M7.6 6.3 V9.7" stroke="#444" stroke-width="1.1" stroke-linecap="round"/></svg>
<div class="hl" style="left:1777px;top:720px;width:100px"></div>
<svg style="left:1821px;top:699px" width="12" height="14" viewBox="0 0 12 14">
<path d="M4.3 3.4 Q4.3 0.8 6.2 0.8 Q8.1 0.8 8.1 3.4" fill="none" stroke="#444" stroke-width="1.2"/><path d="M1 3.6 H11" stroke="#333" stroke-width="1.3" stroke-linecap="round"/><path d="M1.6 5.2 V10.5 Q1.6 12.6 3.6 12.6 H8.8 Q10.8 12.6 10.8 10.5 V5.2" fill="none" stroke="#666" stroke-width="1.3"/><path d="M4.6 6.3 V9.7 M7.6 6.3 V9.7" stroke="#444" stroke-width="1.1" stroke-linecap="round"/></svg>
<div class="hl" style="left:1777px;top:752px;width:100px"></div>
<svg style="left:1821px;top:731px" width="12" height="14" viewBox="0 0 12 14">
<path d="M4.3 3.4 Q4.3 0.8 6.2 0.8 Q8.1 0.8 8.1 3.4" fill="none" stroke="#444" stroke-width="1.2"/><path d="M1 3.6 H11" stroke="#333" stroke-width="1.3" stroke-linecap="round"/><path d="M1.6 5.2 V10.5 Q1.6 12.6 3.6 12.6 H8.8 Q10.8 12.6 10.8 10.5 V5.2" fill="none" stroke="#666" stroke-width="1.3"/><path d="M4.6 6.3 V9.7 M7.6 6.3 V9.7" stroke="#444" stroke-width="1.1" stroke-linecap="round"/></svg>
<div class="hl" style="left:1777px;top:784px;width:100px"></div>
<svg style="left:1821px;top:763px" width="12" height="14" viewBox="0 0 12 14">
<path d="M4.3 3.4 Q4.3 0.8 6.2 0.8 Q8.1 0.8 8.1 3.4" fill="none" stroke="#444" stroke-width="1.2"/><path d="M1 3.6 H11" stroke="#333" stroke-width="1.3" stroke-linecap="round"/><path d="M1.6 5.2 V10.5 Q1.6 12.6 3.6 12.6 H8.8 Q10.8 12.6 10.8 10.5 V5.2" fill="none" stroke="#666" stroke-width="1.3"/><path d="M4.6 6.3 V9.7 M7.6 6.3 V9.7" stroke="#444" stroke-width="1.1" stroke-linecap="round"/></svg>
<div class="a" style="left:1777px;top:781px;width:100px;height:31px;background:#fdf0da"></div>
<div class="a" style="left:1777px;top:812px;width:100px;height:2px;background:#dedede"></div>
<div class="vl" style="left:1876px;top:241px;height:586px"></div>
<div class="vl" style="left:1777px;top:814px;height:13px"></div>
<div class="hl" style="left:1777px;top:827px;width:100px"></div>
<div class="a" style="left:1868px;top:275px;width:9px;height:400px;border-radius:5px 5px 0 0;background:#b0b0b0"></div>
<div class="a" style="left:1882px;top:242px;width:26px;height:36px;background:#fff;box-shadow:-1px 1px 4px rgba(0,0,0,.12)"></div>
<div class="a" style="left:1882px;top:282px;width:26px;height:36px;background:#fff;box-shadow:-1px 1px 4px rgba(0,0,0,.12)"></div>
<div class="a" style="left:1882px;top:322px;width:26px;height:36px;background:#5262fd;box-shadow:-1px 1px 4px rgba(0,0,0,.12)"></div>
<svg style="left:1891px;top:251px" width="17" height="19" viewBox="0 0 17 19">
<path d="M3 0.7 H15 Q17 0.7 17 2.7 V13 L12.5 18.3 H3 Q0.7 18.3 0.7 16 V3 Q0.7 0.7 3 0.7 Z" fill="none" stroke="#3a3a3a" stroke-width="1.2"/>
<path d="M12.5 18.3 V14.5 Q12.5 13.3 13.7 13.3 H17" fill="none" stroke="#3a3a3a" stroke-width="1.1"/>
<text x="8.5" y="14" font-size="12" text-anchor="middle" fill="#3a3a3a" style="-webkit-text-stroke:0">草</text></svg>
<svg style="left:1891px;top:290px" width="18" height="20" viewBox="0 0 18 20">
<path d="M10.5 4.5 L3 12 Q0.5 14.8 2.7 17.2 Q5 19.5 7.8 16.8 L16 8.6 Q18 6.2 16.2 4 Q14 1.8 11.6 4.2 L5.2 10.6 Q4.2 11.8 5.2 12.8 Q6.2 13.7 7.3 12.7 L12.5 7.5" fill="none" stroke="#3a3a3a" stroke-width="1.3"/></svg>
<svg style="left:1890px;top:330px" width="22" height="21" viewBox="0 0 22 21">
<rect x="0.8" y="0.8" width="21" height="18.6" rx="1.5" fill="none" stroke="#fff" stroke-width="1.4"/>
<path d="M11 9 L16.5 3.8 M13 3.8 H16.8 V7.5 M9 11 L3.8 16 M3.8 12.2 V16.2 H7.6" fill="none" stroke="#fff" stroke-width="1.3"/></svg>
<div id="foot"></div>
<div class="btn" style="left:1426px;width:82px;border-color:#c8c8c8;color:#333">放弃</div>
<div class="btn" style="left:1520px;width:130px">另存为模板</div>
<div class="btn" style="left:1662px;width:114px">保存草稿</div>
<div class="btn" style="left:1788px;width:87px;background:#5262fd;border-color:#5262fd;color:#fff">保 存</div>
<div id="bstrip"></div>
</body></html>
